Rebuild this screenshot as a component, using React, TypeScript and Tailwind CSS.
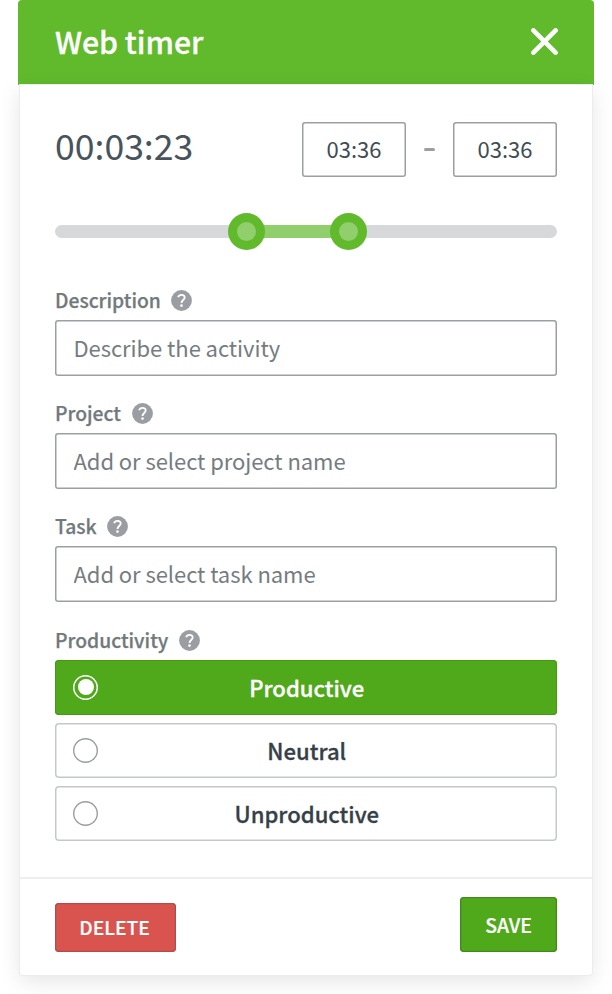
import { useState } from "react";

const LEVELS = ["Productive", "Neutral", "Unproductive"];

function HelpIcon() {
  return (
    <svg viewBox="0 0 21 21" className="size-[21px]" aria-hidden="true">
      <circle cx="10.5" cy="10.5" r="10.4" fill="#9a9da1" />
      <path
        d="M7.1 7.3C7.6 5.7 8.9 4.8 10.5 4.8c1.9 0 3.2 1.1 3.2 2.8 0 2.3-3.2 2.6-3.2 5.3"
        fill="none"
        stroke="#fff"
        strokeWidth="1.8"
      />
      <circle cx="10.5" cy="15.6" r="1.3" fill="#fff" />
    </svg>
  );
}

function FieldLabel({ text }: { text: string }) {
  return (
    <div className="flex h-[21px] items-center gap-[10.6px]">
      <span className="-mt-px text-[19.3px] leading-[20px] font-medium text-[#71797c] [-webkit-text-stroke:0.25px_#71797c]">
        {text}
      </span>
      <HelpIcon />
    </div>
  );
}

function Field({ label, placeholder }: { label: string; placeholder: string }) {
  return (
    <div className="h-[113.2px]">
      <FieldLabel text={label} />
      <input
        placeholder={placeholder}
        className="mt-[9px] block h-[55.5px] w-full rounded-[3px] px-[18.5px] pb-[2px] text-[22px] tracking-[-0.06px] text-[#3c464f] shadow-[inset_0_0_0_1.5px_#9b9fa4] outline-none placeholder:text-[#757c80]"
      />
    </div>
  );
}

function TimeInput({ value }: { value: string }) {
  return (
    <input
      defaultValue={value}
      className="h-[55.5px] w-[104px] rounded-[3px] pb-[2px] text-center text-[22px] text-[#414b54] shadow-[inset_0_0_0_1.5px_#9b9fa4] outline-none"
    />
  );
}

function Knob() {
  return (
    <span className="z-10 flex size-[37px] items-center justify-center rounded-full bg-[#61ba2c]">
      <span className="size-[19px] rounded-full bg-[#90cf6c]" />
    </span>
  );
}

export default function App() {
  const [level, setLevel] = useState("Productive");

  return (
    <div className="h-[994px] overflow-hidden bg-white pl-[18px] font-['Noto_Sans_CJK_SC',sans-serif]">
      <div className="w-[576px]">
        <header className="flex h-[84.5px] items-center justify-between rounded-t-[4px] bg-[#61ba2c] pr-[36px] pl-[37px]">
          <h1 className="-mt-[2px] text-[30.2px] leading-[40px] font-medium text-white [-webkit-text-stroke:0.3px_#fff]">
            Web timer
          </h1>
          <button aria-label="Close" className="-mt-px">
            <svg viewBox="0 0 27 27" className="size-[27px]">
              <path d="M2.4 2.4l22.2 22.2M24.6 2.4L2.4 24.6" stroke="#fff" strokeWidth="4.6" strokeLinecap="round" />
            </svg>
          </button>
        </header>

        <main className="mx-[2px] h-[890.5px] rounded-b-[3px] bg-white shadow-[0_0_0_1px_#ececec,0_6px_22px_rgba(0,0,0,0.11)]">
          <div className="h-[792.7px] px-[35px] pt-[37px]">
            <div className="flex items-start justify-between">
              <span className="pt-[3px] text-[35.6px] leading-[40px] text-[#49535b]">00:03:23</span>
              <div className="flex items-center">
                <TimeInput value="03:36" />
                <span className="mx-[18px] h-[3px] w-[11px] rounded-full bg-[#9b9fa4]" />
                <TimeInput value="03:36" />
              </div>
            </div>

            <div className="mt-[36px] flex h-[37px] items-center">
              <span className="-mr-[4px] h-[13px] w-[177px] rounded-l-full bg-[#d7d8da]" />
              <Knob />
              <span className="-mx-[2px] h-[13px] w-[69.4px] bg-[#90cf6c]" />
              <Knob />
              <span className="-ml-[4px] h-[13px] flex-1 rounded-r-full bg-[#d7d8da]" />
            </div>

            <div className="mt-[40px]">
              <Field label="Description" placeholder="Describe the activity" />
              <Field label="Project" placeholder="Add or select project name" />
              <Field label="Task" placeholder="Add or select task name" />
              <FieldLabel text="Productivity" />
            </div>

            <div className="mt-[9px] flex flex-col gap-[7.8px]">
              {LEVELS.map((name) => {
                const active = name === level;
                return (
                  <button
                    key={name}
                    onClick={() => setLevel(name)}
                    className={`flex h-[55.2px] w-full items-center rounded-[4px] px-[18px] text-[22.1px] font-medium ${
                      active
                        ? "bg-[#50a81b] text-white shadow-[inset_0_0_0_1px_#48971b] [-webkit-text-stroke:0.3px_#fff]"
                        : "bg-white text-[#363f48] shadow-[inset_0_0_0_1.5px_#c5c8ca] [-webkit-text-stroke:0.3px_#363f48]"
                    }`}
                  >
                    <span
                      className={`flex size-[25px] items-center justify-center rounded-full ${
                        active
                          ? "shadow-[inset_0_0_0_1.5px_#fff]"
                          : "shadow-[inset_0_0_0_1.4px_#999da1]"
                      }`}
                    >
                      {active && <span className="size-[16px] rounded-full bg-white" />}
                    </span>
                    <span className="flex-1 pr-[23.5px] text-center">{name}</span>
                  </button>
                );
              })}
            </div>
          </div>

          <footer className="flex items-end justify-between border-t-2 border-[#edefef] px-[35px] pt-[17.8px]">
            <button className="h-[49px] w-[121px] rounded-[4px] bg-[#da544f] pr-[2px] pb-[1px] text-[19.2px] font-medium text-white shadow-[inset_0_0_0_1.3px_#b04d4a] [-webkit-text-stroke:0.2px_#fff]">
              DELETE
            </button>
            <button className="h-[55px] w-[97px] rounded-[4px] bg-[#50a81b] text-[19.4px] font-medium text-white shadow-[inset_0_0_0_1.3px_#438a1c] [-webkit-text-stroke:0.2px_#fff]">
              SAVE
            </button>
          </footer>
        </main>
      </div>
    </div>
  );
}
